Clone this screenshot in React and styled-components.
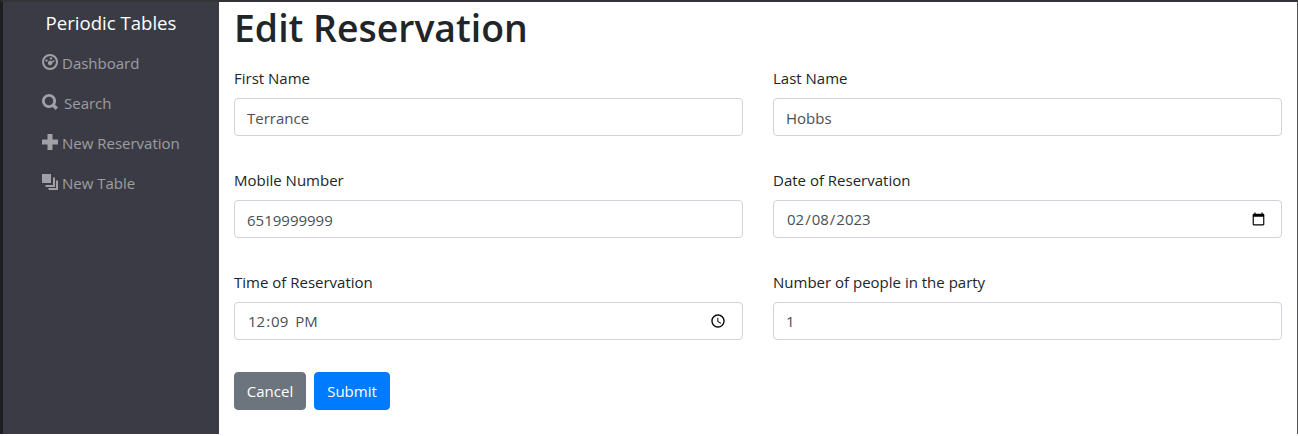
import React from 'react';
import styled, { createGlobalStyle } from 'styled-components';

const GlobalStyle = createGlobalStyle`
  * { box-sizing: border-box; }
  body {
    margin: 0;
    background: #fff;
    font-family: "Open Sans", "Noto Sans", sans-serif;
    color: #212529;
    overflow: hidden;
  }
`;

const Frame = styled.div`
  display: flex;
  width: 1298px;
  height: 434px;
  border-top: 2px solid #333338;
  border-left: 3px solid #1e1e22;
  border-right: 1px solid #555;
`;

const Sidebar = styled.nav`
  flex: 0 0 216px;
  background: #3b3b45;
  padding-left: 39px;
`;

const Brand = styled.div`
  width: 138px;
  height: 41px;
  padding-top: 6px;
  color: #fff;
  font-size: 18.6px;
  line-height: 30px;
  text-align: center;
`;

const NavItem = styled.a`
  display: flex;
  align-items: center;
  gap: ${props => props.$gap}px;
  height: 40px;
  color: rgba(255, 255, 255, 0.5);
  font-size: 15px;
`;

const Glyph = styled.svg`
  flex: 0 0 16px;
  width: 16px;
  height: 16px;
  fill: #a0a0a6;
  margin-top: -2px;
`;

const Main = styled.main`
  flex: 1;
  padding: 0 15px;
`;

const Title = styled.h1`
  margin: 0 0 12px;
  height: 52px;
  font-size: 37.4px;
  font-weight: 600;
  line-height: 52px;
`;

const FormGrid = styled.form`
  display: grid;
  grid-template-columns: 509px 509px;
  column-gap: 30px;
  row-gap: 32px;
`;

const Field = styled.div`
  display: flex;
  flex-direction: column;
  gap: 8px;
`;

const Label = styled.label`
  height: 24px;
  font-size: 15px;
  line-height: 24px;
`;

const Input = styled.input`
  width: 100%;
  height: 38px;
  padding: 6px 12px;
  border: 1px solid #ced4da;
  border-radius: 4px;
  background: #fff;
  color: #495057;
  font-family: inherit;
  font-size: 15px;
  line-height: 24px;

  &[type='text'] {
    padding: 7px 12px 5px;
  }

  &::-webkit-datetime-edit-ampm-field {
    margin-left: 3px;
  }

  &::-webkit-calendar-picker-indicator {
    margin-right: 1px;
  }
`;

const Actions = styled.div`
  display: flex;
  gap: 8px;
  margin-top: 32px;
`;

const Button = styled.button`
  width: ${props => props.$width}px;
  height: 38px;
  padding: 0;
  border: 1px solid ${props => props.$color};
  border-radius: 4px;
  background: ${props => props.$color};
  color: #fff;
  font-family: inherit;
  font-size: 15px;
`;

const links = [
  {
    label: 'Dashboard',
    gap: 4,
    icon: (
      <path
        fillRule="evenodd"
        d="M8 0a8 8 0 1 0 0 16A8 8 0 0 0 8 0Zm0 2a6 6 0 1 1 0 12A6 6 0 0 1 8 2ZM9 3.2a1.200 1.200 0 1 0 0 2.400 1.200 1.200 0 0 0 0-2.400ZM12 6 9.600 7.400A2.200 2.200 0 1 0 10.300 9L12.600 7 12 6ZM4.600 5.400a1.200 1.200 0 1 0 0 2.400 1.200 1.200 0 0 0 0-2.400Z"
      />
    ),
  },
  {
    label: 'Search',
    gap: 6,
    icon: (
      <path
        fillRule="evenodd"
        d="M7 0a7 7 0 1 0 3.600 13l3 3 2.400-2.400-3-3A7 7 0 0 0 7 0Zm0 2.700a4.300 4.300 0 1 1 0 8.600 4.300 4.300 0 0 1 0-8.600Z"
      />
    ),
  },
  {
    label: 'New Reservation',
    gap: 4,
    icon: <path d="M5.500 0h5v5.500H16v5h-5.500V16h-5v-5.500H0v-5h5.500V0Z" />,
  },
  {
    label: 'New Table',
    gap: 4,
    icon: <path d="M0 0h9v9H0V0Zm11 3.500h2V13H3.500v-2H11V3.500Zm3 3h2V16H6.500v-2H14V6.500Z" />,
  },
];

const fields = [
  { id: 'first_name', label: 'First Name', type: 'text', value: 'Terrance' },
  { id: 'last_name', label: 'Last Name', type: 'text', value: 'Hobbs' },
  { id: 'mobile_number', label: 'Mobile Number', type: 'text', value: '6519999999' },
  { id: 'reservation_date', label: 'Date of Reservation', type: 'date', value: '2023-02-08' },
  { id: 'reservation_time', label: 'Time of Reservation', type: 'time', value: '12:09' },
  { id: 'people', label: 'Number of people in the party', type: 'number', value: '1' },
];

const App = () => (
  <>
    <GlobalStyle />
    <Frame>
      <Sidebar>
        <Brand>Periodic Tables</Brand>
        {links.map(link => (
          <NavItem key={link.label} $gap={link.gap}>
            <Glyph viewBox="0 0 16 16">{link.icon}</Glyph>
            {link.label}
          </NavItem>
        ))}
      </Sidebar>
      <Main>
        <Title>Edit Reservation</Title>
        <FormGrid>
          {fields.map(field => (
            <Field key={field.id}>
              <Label htmlFor={field.id}>{field.label}</Label>
              <Input id={field.id} type={field.type} defaultValue={field.value} />
            </Field>
          ))}
        </FormGrid>
        <Actions>
          <Button type="button" $width={72} $color="#6c757d">Cancel</Button>
          <Button type="submit" $width={76} $color="#007bff">Submit</Button>
        </Actions>
      </Main>
    </Frame>
  </>
);

export default App;
